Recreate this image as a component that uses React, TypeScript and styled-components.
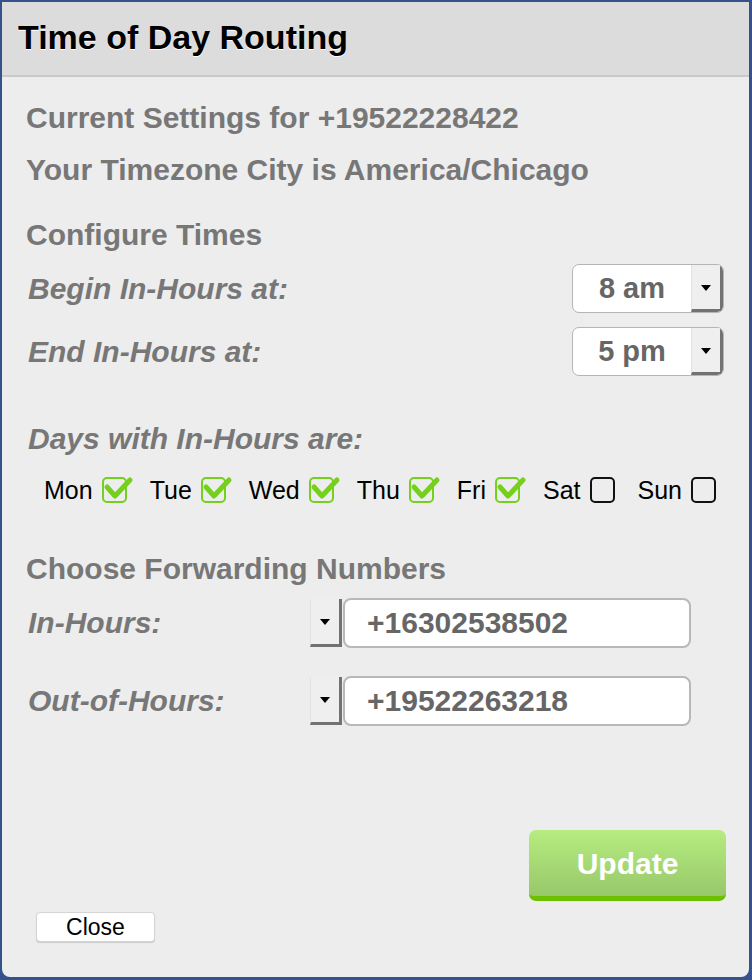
import styled, { createGlobalStyle } from "styled-components";

const GlobalStyle = createGlobalStyle`
    html, body {
        margin: 0;
        padding: 0;
        background: #34528c;
    }
    body {
        font-family: "Liberation Sans", Arial, Helvetica, sans-serif;
    }
    #root {
        height: 980px;
        padding: 2px 3px 3px 2px;
        box-sizing: border-box;
    }
`

const Dialog = styled.div`
    height: 975px;
    background: #ededed;
    border-radius: 0 0 8px 8px;
    display: flex;
    flex-direction: column;
    overflow: hidden;
`

const Header = styled.header`
    height: 75px;
    box-sizing: border-box;
    padding: 18px 0 0 16px;
    background: #dcdcdc;
    border-bottom: 2px solid #c9c9c9;
`

const Title = styled.h1`
    margin: 0;
    font-size: 34px;
    line-height: 34px;
    font-weight: bold;
    color: #000;
    text-shadow: 0 1px 0 #fff;
`

const Body = styled.div`
    flex: 1;
    display: flex;
    flex-direction: column;
    padding: 15px 25px 0 24px;
`

const InfoLine = styled.div<{ $top?: number }>`
    margin-top: ${(p) => p.$top || 0}px;
    font-size: 30px;
    line-height: 52px;
    font-weight: bold;
    color: #777;
    white-space: nowrap;
`

const FieldLabel = styled(InfoLine)`
    font-style: italic;
    padding-left: 2px;
`

const TimeRow = styled.div<{ $top: number }>`
    margin-top: ${(p) => p.$top}px;
    display: flex;
    align-items: center;
    justify-content: space-between;
    height: 49px;
`

const Picker = styled.div`
    width: 152px;
    height: 49px;
    box-sizing: border-box;
    display: flex;
    background: #fff;
    border: 1px solid #b5b5b5;
    border-radius: 7px;
    overflow: hidden;
`

const PickerValue = styled.span`
    flex: 1;
    text-align: center;
    font-size: 29px;
    font-weight: bold;
    line-height: 47px;
    color: #666;
`

const ArrowButton = styled.span<{ $height?: number }>`
    width: 32px;
    ${(p) => (p.$height ? `height: ${p.$height}px;` : "")}
    box-sizing: border-box;
    display: flex;
    align-items: center;
    justify-content: center;
    background: #efefef;
    border-left: 1px solid #e2e2e2;
    border-right: 3px solid #727272;
    border-bottom: 3px solid #727272;
    flex-shrink: 0;
`

const Triangle = styled.span`
    width: 0;
    height: 0;
    border-left: 5px solid transparent;
    border-right: 5px solid transparent;
    border-top: 6px solid #000;
    margin-top: 1px;
`

const DaysRow = styled.div`
    margin-top: 5px;
    height: 40px;
    display: flex;
    align-items: center;
    gap: 23px;
    padding-left: 18px;
`

const Day = styled.label`
    display: flex;
    align-items: center;
    gap: 9px;
    font-size: 25px;
    color: #000;
`

const PhoneRow = styled.div<{ $top: number }>`
    margin-top: ${(p) => p.$top}px;
    display: flex;
    align-items: center;
    height: 50px;
`

const PhoneLabel = styled(FieldLabel)`
    width: 282px;
`

const PhoneInput = styled.div`
    margin-left: 1px;
    width: 348px;
    height: 50px;
    box-sizing: border-box;
    border: 2px solid #b8b8b8;
    border-radius: 8px;
    background: #fff;
    padding-left: 22px;
    font-size: 30px;
    font-weight: bold;
    line-height: 46px;
    color: #666;
`

const Footer = styled.div`
    margin-top: 104px;
    display: flex;
    flex-direction: column;
`

const UpdateButton = styled.button`
    align-self: flex-end;
    margin-right: -2px;
    width: 197px;
    height: 71px;
    box-sizing: border-box;
    border: none;
    border-bottom: 5px solid #6cc000;
    border-radius: 7px;
    background: linear-gradient(#b6ec80, #97c86a);
    color: #fff;
    font-family: inherit;
    font-size: 30px;
    font-weight: bold;
    padding: 2px 0 0;
`

const CloseButton = styled.button`
    margin: 11px 0 0 10px;
    width: 119px;
    height: 30px;
    box-sizing: border-box;
    background: #fff;
    border: 1px solid #d4d4d4;
    border-radius: 4px;
    box-shadow: 0 1px 1px rgba(0, 0, 0, 0.15);
    font-family: inherit;
    font-size: 23px;
    line-height: 26px;
    color: #000;
    padding: 0;
`

const CheckBox = ({ checked }: { checked: boolean }) => (
    <svg width="25" height="26" viewBox="0 0 25 26" style={{ overflow: "visible" }}>
        <rect
            x="1"
            y="1"
            width="23"
            height="24"
            rx="4"
            fill="none"
            stroke={checked ? "#74d01c" : "#111"}
            strokeWidth="2"
        />
        {checked && (
            <path
                d="M5 10 L13 19 L28 3"
                fill="none"
                stroke="#74d01c"
                strokeWidth="5"
                strokeLinecap="round"
                strokeLinejoin="round"
            />
        )}
    </svg>
)

const days = [
    { name: "Mon", on: true },
    { name: "Tue", on: true },
    { name: "Wed", on: true },
    { name: "Thu", on: true },
    { name: "Fri", on: true },
    { name: "Sat", on: false },
    { name: "Sun", on: false },
]

const App = () => {
    return (
        <>
            <GlobalStyle />
            <Dialog>
                <Header>
                    <Title>Time of Day Routing</Title>
                </Header>
                <Body>
                    <InfoLine>Current Settings for +19522228422</InfoLine>
                    <InfoLine>Your Timezone City is America/Chicago</InfoLine>

                    <InfoLine $top={13}>Configure Times</InfoLine>
                    <TimeRow $top={3}>
                        <FieldLabel>Begin In-Hours at:</FieldLabel>
                        <Picker>
                            <PickerValue>8 am</PickerValue>
                            <ArrowButton><Triangle /></ArrowButton>
                        </Picker>
                    </TimeRow>
                    <TimeRow $top={14}>
                        <FieldLabel>End In-Hours at:</FieldLabel>
                        <Picker>
                            <PickerValue>5 pm</PickerValue>
                            <ArrowButton><Triangle /></ArrowButton>
                        </Picker>
                    </TimeRow>

                    <FieldLabel $top={37}>Days with In-Hours are:</FieldLabel>
                    <DaysRow>
                        {days.map((d) => (
                            <Day key={d.name}>
                                {d.name}
                                <CheckBox checked={d.on} />
                            </Day>
                        ))}
                    </DaysRow>

                    <InfoLine $top={33}>Choose Forwarding Numbers</InfoLine>
                    <PhoneRow $top={3}>
                        <PhoneLabel>In-Hours:</PhoneLabel>
                        <ArrowButton $height={48}><Triangle /></ArrowButton>
                        <PhoneInput>+16302538502</PhoneInput>
                    </PhoneRow>
                    <PhoneRow $top={28}>
                        <PhoneLabel>Out-of-Hours:</PhoneLabel>
                        <ArrowButton $height={48}><Triangle /></ArrowButton>
                        <PhoneInput>+19522263218</PhoneInput>
                    </PhoneRow>

                    <Footer>
                        <UpdateButton>Update</UpdateButton>
                        <CloseButton>Close</CloseButton>
                    </Footer>
                </Body>
            </Dialog>
        </>
    )
}

export default App;
